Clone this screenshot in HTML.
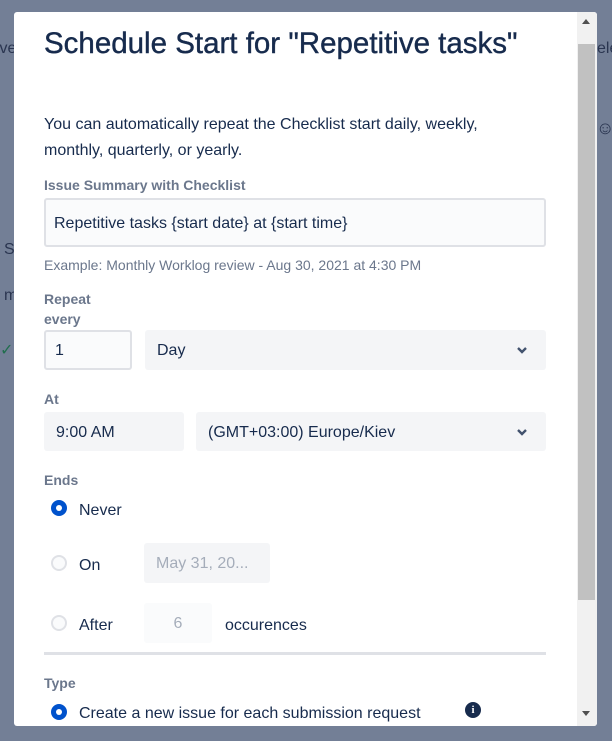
<!DOCTYPE html>
<html><head><style>
*{box-sizing:border-box;margin:0;padding:0}
body{width:612px;height:741px;background:#737f96;font-family:"Liberation Sans",sans-serif;position:relative;overflow:hidden;color:#172b4d}
.bg{position:absolute;color:#2a3550;font-size:16px}
.modal{position:absolute;left:14px;top:12px;width:583px;height:714px;background:#fff;border-radius:3px;overflow:hidden}
.a{position:absolute}
h1{position:absolute;left:30px;top:15px;font-size:29.5px;font-weight:normal;color:#172b4d;-webkit-text-stroke:0.4px #172b4d}
.lbl{position:absolute;font-size:14px;color:#6b778c;font-weight:bold}
.t{position:absolute;font-size:16px;color:#172b4d}
.box{position:absolute;border-radius:3px;background:#f4f5f7;font-size:16px;padding-left:12px;display:flex;align-items:center;padding-top:2px}
.radio{position:absolute;width:16px;height:16px;border-radius:50%}
.on{background:#0052cc}
.on::after{content:"";position:absolute;left:5px;top:5px;width:6px;height:6px;border-radius:50%;background:#fff}
.off{border:2px solid #dfe1e6;background:#fafbfc}
.chev{position:absolute;right:18px;top:50%;margin-top:-4px}
</style></head><body>
<div class="bg" style="left:-4px;top:40px">ive</div>
<div class="bg" style="left:597px;top:40px">ele</div>
<div class="bg" style="left:4px;top:241px">S</div>
<div class="bg" style="left:4px;top:287px">m</div>
<div class="bg" style="left:0px;top:340px;color:#216e4e">✓</div>
<div class="bg" style="left:596px;top:118px;font-size:18px">☺</div>
<div class="modal">
<h1>Schedule Start for "Repetitive tasks"</h1>
<div class="t" style="left:30px;top:100px;line-height:26px;font-size:16px">You can automatically repeat the Checklist start daily, weekly,<br>monthly, quarterly, or yearly.</div>
<div class="lbl" style="left:30px;top:165px">Issue Summary with Checklist</div>
<div class="box" style="left:30px;top:186px;width:502px;height:49px;background:#fafbfc;border:2px solid #dfe1e6;padding-left:8px">Repetitive tasks {start date} at {start time}</div>
<div class="a" style="left:30px;top:245px;font-size:14px;color:#6b778c">Example: Monthly Worklog review - Aug 30, 2021 at 4:30 PM</div>
<div class="lbl" style="left:30px;top:277px;line-height:20px;font-weight:bold">Repeat<br>every</div>
<div class="box" style="left:30px;top:318px;width:88px;height:40px;background:#fafbfc;border:2px solid #dfe1e6;padding-left:9px">1</div>
<div class="box" style="left:131px;top:318px;width:401px;height:40px">Day<svg class="chev" width="12" height="8" viewBox="0 0 12 8"><path d="M2 2l4 4 4-4" stroke="#42526e" stroke-width="2.4" fill="none"/></svg></div>
<div class="lbl" style="left:30px;top:379px">At</div>
<div class="box" style="left:30px;top:400px;width:140px;height:39px">9:00 AM</div>
<div class="box" style="left:182px;top:400px;width:350px;height:39px">(GMT+03:00) Europe/Kiev<svg class="chev" width="12" height="8" viewBox="0 0 12 8"><path d="M2 2l4 4 4-4" stroke="#42526e" stroke-width="2.4" fill="none"/></svg></div>
<div class="lbl" style="left:30px;top:460px">Ends</div>
<div class="radio on" style="left:37px;top:488px"></div>
<div class="t" style="left:65px;top:490px">Never</div>
<div class="radio off" style="left:37px;top:543px"></div>
<div class="t" style="left:65px;top:545px">On</div>
<div class="box" style="left:130px;top:531px;width:126px;height:40px;color:#a5adba">May 31, 20...</div>
<div class="radio off" style="left:37px;top:603px"></div>
<div class="t" style="left:65px;top:605px">After</div>
<div class="box" style="left:130px;top:591px;width:68px;height:40px;background:#fafbfc;color:#a5adba;justify-content:center;padding:2px 0 0">6</div>
<div class="t" style="left:211px;top:605px">occurences</div>
<div class="a" style="left:30px;top:640px;width:502px;height:3px;background:#dfe1e6"></div>
<div class="lbl" style="left:30px;top:663px">Type</div>
<div class="radio on" style="left:37px;top:692px"></div>
<div class="t" style="left:65px;top:693px">Create a new issue for each submission request</div>
<div class="a" style="left:451px;top:690px;width:16px;height:16px;border-radius:50%;background:#172b4d;color:#fff;font-size:11px;font-weight:bold;text-align:center;line-height:16px;font-family:'Liberation Serif',serif">i</div>
<div class="a" style="left:563px;top:0;width:20px;height:714px;background:#f1f1f1"></div>
<div class="a" style="left:564px;top:32px;width:17px;height:556px;background:#c1c1c1"></div>
<svg class="a" style="left:566px;top:5px" width="12" height="8"><path d="M2 7h8L6 2z" fill="#505050"/></svg>
<svg class="a" style="left:566px;top:697px" width="12" height="8"><path d="M2 2h8L6 7z" fill="#505050"/></svg>
</div>
</body></html>
